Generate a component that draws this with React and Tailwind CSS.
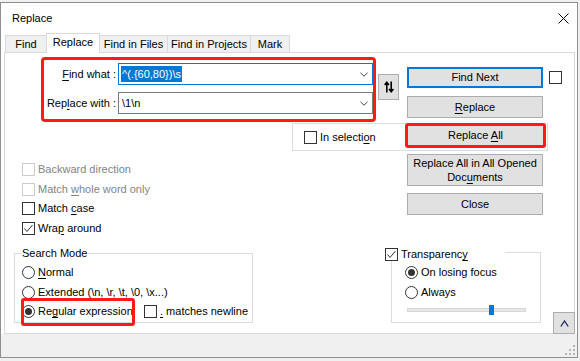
import React from "react";

const U = ({ children }) => (
  <span className="underline underline-offset-[2px] decoration-[1px]">{children}</span>
);

function Check({ checked, disabled }) {
  return (
    <span
      className={`w-[13px] h-[13px] shrink-0 bg-white border flex items-center justify-center ${
        disabled ? "border-[#cccccc]" : "border-[#333333]"
      }`}
    >
      {checked && (
        <svg width="11" height="11" viewBox="0 0 11 11">
          <path d="M1.5 5.5L4 8.5L9.5 2" stroke="#333" strokeWidth="1" fill="none" />
        </svg>
      )}
    </span>
  );
}

function Radio({ on }) {
  return (
    <span className="w-[13px] h-[13px] shrink-0 rounded-full bg-white border border-[#333333] flex items-center justify-center">
      {on && <span className="w-[7px] h-[7px] rounded-full bg-[#333333]" />}
    </span>
  );
}

function Row({ children }) {
  return <div className="h-[19.5px] flex items-center gap-[3px]">{children}</div>;
}

function Btn({ children, className = "" }) {
  return (
    <div
      className={`flex items-center justify-center text-center bg-[#e1e1e1] border border-[#adadad] ${className}`}
    >
      {children}
    </div>
  );
}

function Chevron() {
  return (
    <svg width="8" height="5" viewBox="0 0 8 5" className="shrink-0">
      <path d="M0.5 0.8L4 4.2L7.5 0.8" stroke="#444" strokeWidth="1" fill="none" />
    </svg>
  );
}

const tabs = [
  { label: "Find", w: "w-[42px]" },
  { label: "Replace", w: "w-[54px]", active: true },
  { label: "Find in Files", w: "w-[69px]" },
  { label: "Find in Projects", w: "w-[84px]" },
  { label: "Mark", w: "w-[40px]" },
];

export default function App() {
  return (
    <div className="w-[580px] h-[361px] bg-[#f0f0f0] overflow-hidden font-['Liberation_Sans',Arial,sans-serif] text-[11px] leading-[13px] text-black">
      <div className="mt-[2px] w-[578px] h-[356px] border border-[#8f8f8f] bg-white flex flex-col">
        {/* title bar */}
        <div className="h-[30px] shrink-0 flex items-center justify-between pl-[11px] pr-[8px]">
          <span>Replace</span>
          <svg width="11" height="11" viewBox="0 0 11 11">
            <path d="M0.5 0.5L10.5 10.5M10.5 0.5L0.5 10.5" stroke="#000" strokeWidth="1" />
          </svg>
        </div>

        {/* tabs */}
        <div className="h-[19px] shrink-0 flex items-end pl-[4px]">
          {tabs.map((t, i) =>
            t.active ? (
              <div
                key={t.label}
                className={`${t.w} -ml-[1px] h-[20px] -mb-[1px] relative z-10 bg-white border-t border-l border-r border-[#d9d9d9] flex items-center justify-center pb-[2px]`}
              >
                {t.label}
              </div>
            ) : (
              <div
                key={t.label}
                className={`${t.w} ${i > 0 ? "-ml-[1px]" : ""} h-[17px] bg-[#f0f0f0] border-t border-l border-r border-[#d9d9d9] flex items-center justify-center`}
              >
                {t.label}
              </div>
            )
          )}
        </div>

        {/* panel */}
        <div className="relative shrink-0 ml-[3px] w-[571px] h-[282px] border border-[#d9d9d9] bg-white">
          <div className="h-[188px] flex">
            {/* left column */}
            <div className="w-[402px] shrink-0 flex flex-col">
              <div className="flex items-start">
                <div className="ml-[36px] mt-[4px] w-[335px] h-[65px] border-[3px] border-[#ff1a1a] rounded-[4px] flex flex-col pt-[3px] gap-[7px]">
                  <div className="flex items-center">
                    <span className="w-[74px] text-right pr-[2px]">
                      <U>F</U>ind what :
                    </span>
                    <div className="w-[255px] h-[22px] border border-[#0078d7] bg-white flex items-center justify-between pl-[2px] pr-[4px]">
                      <span className="bg-[#0078d7] text-white leading-[16px] px-[1px]">
                        {"^(.{60,80})\\s"}
                      </span>
                      <Chevron />
                    </div>
                  </div>
                  <div className="flex items-center">
                    <span className="w-[74px] text-right pr-[2px]">
                      Rep<U>l</U>ace with :
                    </span>
                    <div className="w-[255px] h-[22px] border border-[#7a7a7a] bg-white flex items-center justify-between pl-[3px] pr-[4px]">
                      <span>{"\\1\\n"}</span>
                      <Chevron />
                    </div>
                  </div>
                </div>
                <Btn className="ml-[2px] mt-[21px] w-[21px] h-[26px]">
                  <svg width="10" height="12" viewBox="0 0 10 12">
                    <path d="M2.8 11.5V1.5M0.6 4L2.8 1.3L5 4" stroke="#000" strokeWidth="1.6" fill="none" />
                    <path d="M7.2 0.5V10.5M5 8L7.2 10.7L9.4 8" stroke="#000" strokeWidth="1.6" fill="none" />
                  </svg>
                </Btn>
              </div>

              <div className="mt-[1px] ml-[287px] w-[256px] h-[28px] shrink-0 border border-[#dcdcdc] flex items-center pl-[11px] gap-[3px]">
                <Check />
                <span>
                  In selecti<U>o</U>n
                </span>
              </div>

              <div className="mt-[9px] ml-[17px] flex flex-col">
                <Row>
                  <Check disabled />
                  <span className="text-[#838383]">Backward direction</span>
                </Row>
                <Row>
                  <Check disabled />
                  <span className="text-[#838383]">
                    Match <U>w</U>hole word only
                  </span>
                </Row>
                <Row>
                  <Check />
                  <span>
                    Match <U>c</U>ase
                  </span>
                </Row>
                <Row>
                  <Check checked />
                  <span>
                    Wra<U>p</U> around
                  </span>
                </Row>
              </div>
            </div>

            {/* right column */}
            <div className="relative z-10 flex flex-col">
              <div className="mt-[14px] flex items-center">
                <div className="w-[136px] h-[21px] border-2 border-[#0078d7] bg-[#e1e1e1] flex items-center justify-center">
                  Find Next
                </div>
                <span className="ml-[6px]">
                  <Check />
                </span>
              </div>
              <Btn className="mt-[8px] w-[136px] h-[22px]">
                <span>
                  <U>R</U>eplace
                </span>
              </Btn>
              <div className="mt-[5px] -ml-[2px] w-[141px] h-[25px] border-[3px] border-[#ff1a1a] rounded-[3px] bg-[#e1e1e1] flex items-center justify-center">
                <span>
                  Replace <U>A</U>ll
                </span>
              </div>
              <Btn className="mt-[6px] w-[136px] h-[32px] leading-[14px]">
                <span>
                  Replace All in All Opened
                  <br />
                  Doc<U>u</U>ments
                </span>
              </Btn>
              <Btn className="mt-[7px] w-[136px] h-[22px]">Close</Btn>
            </div>
          </div>

          {/* bottom groups */}
          <div className="flex items-start">
            <div className="relative ml-[9px] mt-[12px] w-[239px] h-[70px] border border-[#dcdcdc] pt-[9px] pl-[7px]">
              <span className="absolute left-[6px] -top-[7px] bg-white px-[1px]">Search Mode</span>
              <Row>
                <Radio />
                <span>
                  <U>N</U>ormal
                </span>
              </Row>
              <Row>
                <Radio />
                <span>{"Extended (\\n, \\r, \\t, \\0, \\x...)"}</span>
              </Row>
              <div className="relative h-[19.5px] flex items-center">
                <div className="w-[122px] flex items-center gap-[3px]">
                  <Radio on />
                  <span>
                    Re<U>g</U>ular expression
                  </span>
                </div>
                <Check />
                <span className="ml-[3px]">
                  <U>.</U> matches newline
                </span>
                <div className="absolute -left-[1px] -top-[4px] w-[114px] h-[28px] border-[3px] border-[#ff1a1a] rounded-[3px]" />
              </div>
            </div>

            <div className="relative ml-[138px] mt-[11px] w-[150px] h-[71px] border border-[#dcdcdc] pt-[10px] pl-[13px]">
              <div className="absolute -left-[7px] -top-[5px] w-[120px] bg-white flex items-center gap-[3px]">
                <Check checked />
                <span>
                  Transparenc<U>y</U>
                </span>
              </div>
              <Row>
                <Radio on />
                <span>On losing focus</span>
              </Row>
              <Row>
                <Radio />
                <span>Always</span>
              </Row>
              <div className="relative ml-[2px] mt-[3px] w-[119px] h-[10px] flex items-center">
                <div className="w-full h-[4px] bg-[#e7e7e7] border border-[#d6d6d6]" />
                <div className="absolute left-[82px] top-[0px] w-[5px] h-[10px] bg-[#0078d7]" />
              </div>
            </div>
          </div>

          <Btn className="absolute -right-[1px] -bottom-[1px] w-[22px] h-[22px]">
            <svg width="9" height="7" viewBox="0 0 9 7">
              <path d="M0.8 6.5L4.5 1L8.2 6.5" stroke="#1c2a5a" strokeWidth="1.3" fill="none" />
            </svg>
          </Btn>
        </div>

        {/* status strip */}
        <div className="flex-1 bg-[#f0f0f0] flex justify-end items-end pr-[1px] pb-[1px]">
          <svg width="11" height="11" viewBox="0 0 11 11">
            <g fill="#b5b5b5">
              <rect x="8" y="0" width="2" height="2" />
              <rect x="4" y="4" width="2" height="2" />
              <rect x="8" y="4" width="2" height="2" />
              <rect x="0" y="8" width="2" height="2" />
              <rect x="4" y="8" width="2" height="2" />
              <rect x="8" y="8" width="2" height="2" />
            </g>
          </svg>
        </div>
      </div>
    </div>
  );
}
